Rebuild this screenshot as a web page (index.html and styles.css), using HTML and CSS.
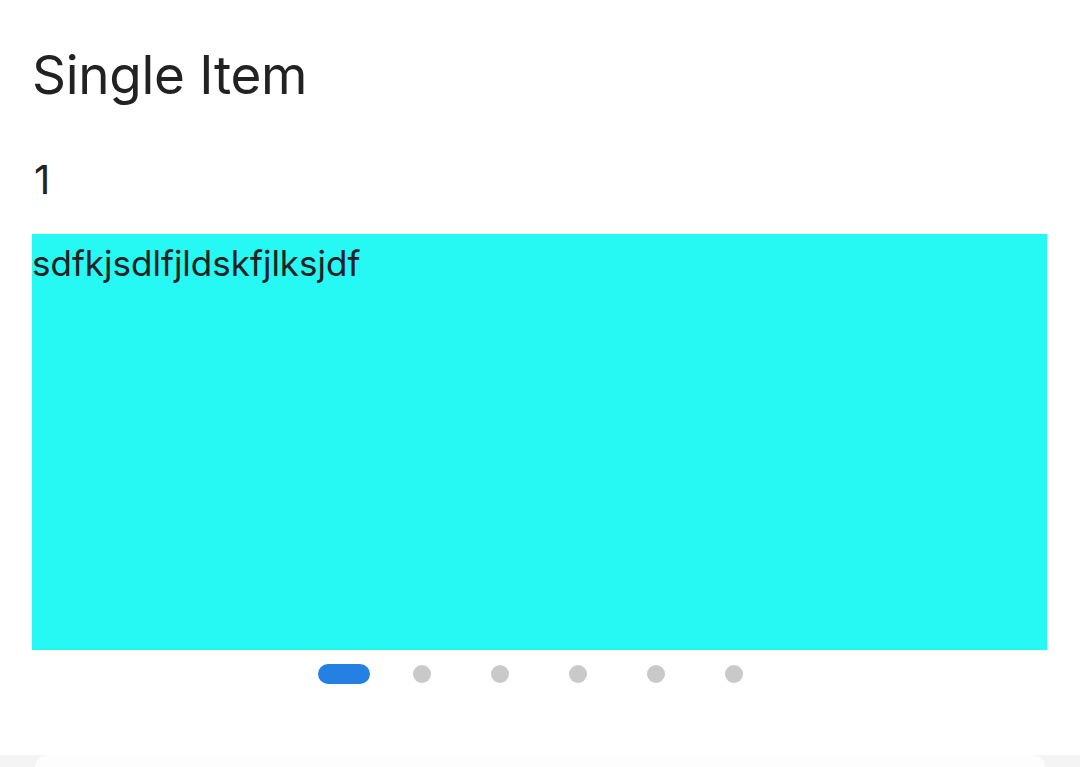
FILE: index.html
```html
<!DOCTYPE html>
<html>
<head>
<meta charset="utf-8">
<link rel="stylesheet" href="styles.css">
</head>
<body>
<div class="page">
  <h1 class="title">Single Item</h1>
  <div class="counter">1</div>
  <div class="slide">sdfkjsdlfjldskfjlksjdf</div>
  <div class="dots">
    <span class="dot active"></span>
    <span class="dot"></span>
    <span class="dot"></span>
    <span class="dot"></span>
    <span class="dot"></span>
    <span class="dot"></span>
  </div>
</div>
<div class="sheet"><div class="sheet-card"></div></div>
</body>
</html>
```
FILE: styles.css
```css
html, body {
  margin: 0;
  padding: 0;
  background: #fff;
  height: 767px;
  overflow: hidden;
}
body {
  font-family: Inter, "Noto Sans", sans-serif;
  color: #222;
  display: flex;
  flex-direction: column;
}
.page {
  flex: 1;
  padding: 0 33px 0 32px;
}
.title {
  margin: 0;
  padding-top: 42px;
  font-size: 53px;
  font-weight: 400;
  line-height: 66px;
  letter-spacing: -0.3px;
}
.counter {
  margin-top: 48px;
  font-size: 40px;
  line-height: 48px;
  padding-left: 2px;
}
.slide {
  height: 416px;
  background: #26f8f4;
  font-size: 35px;
  line-height: 58px;
  margin-top: 30px;
}
.dots {
  display: flex;
  align-items: center;
  gap: 60px;
  padding-left: 286px;
  margin-top: 14px;
  height: 20px;
}
.dot {
  width: 18px;
  height: 18px;
  border-radius: 50%;
  background: #c9c9c9;
}
.dot.active {
  width: 52px;
  height: 20px;
  border-radius: 10px;
  background: #2580e3;
  margin-right: -17px;
}
.sheet {
  height: 12px;
  background: #f4f4f4;
  display: flex;
  justify-content: center;
}
.sheet-card {
  width: 1010px;
  height: 12px;
  background: #fdfdfd;
  border-radius: 12px 12px 0 0;
}
```
